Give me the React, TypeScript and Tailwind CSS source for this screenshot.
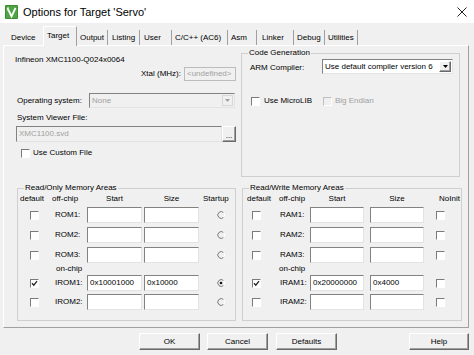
import type { ReactNode } from "react";

const TABS = [
  { name: "Device", w: "w-[40px] pl-[8px]" },
  { name: "Target", w: "w-[34px] pl-[3px]", active: true },
  { name: "Output", w: "w-[31px] pl-[3px]" },
  { name: "Listing", w: "w-[32px] pl-[4px]" },
  { name: "User", w: "w-[32px] pl-[4px]" },
  { name: "C/C++ (AC6)", w: "w-[56px] pl-[3px]" },
  { name: "Asm", w: "w-[29px] pl-[3px]" },
  { name: "Linker", w: "w-[37px] pl-[5px]" },
  { name: "Debug", w: "w-[31px] pl-[3px]" },
  { name: "Utilities", w: "w-[33px] pl-[3px]" },
];

const SUNKEN = "border border-t-[#828282] border-l-[#828282] border-r-[#e3e3e3] border-b-[#e3e3e3]";
const RAISED = "border border-t-white border-l-white border-r-[#696969] border-b-[#696969] shadow-[inset_-1px_-1px_0_#a0a0a0]";

const ROM_ROWS = [
  { label: "ROM1:", start: "", size: "" },
  { label: "ROM2:", start: "", size: "" },
  { label: "ROM3:", start: "", size: "" },
];
const RAM_ROWS = [
  { label: "RAM1:", start: "", size: "" },
  { label: "RAM2:", start: "", size: "" },
  { label: "RAM3:", start: "", size: "" },
];

export default function App() {
  return (
    <div className="h-[355px] w-[474px] overflow-hidden bg-[#f0f0f0] font-['Liberation_Sans',Arial,sans-serif] text-[8px] leading-[10px] text-black">
      {/* title bar */}
      <div className="flex h-[23px] items-center bg-white pl-[5px] pr-[7px]">
        <KeilIcon />
        <span className="ml-[5px] text-[11px] leading-[14px]">Options for Target 'Servo'</span>
        <svg className="ml-auto" width="10" height="10" viewBox="0 0 10 10">
          <path d="M0.5 0.5 L9.5 9.5 M9.5 0.5 L0.5 9.5" stroke="#222" strokeWidth="1" />
        </svg>
      </div>

      {/* tabs */}
      <div className="flex h-[22px] items-end pl-[3px]">
        {TABS.map((tab) =>
          tab.active ? (
            <div key={tab.name} className={`${tab.w} relative z-10 -mb-px h-[20px] border-t border-l border-r border-t-white border-l-white border-r-[#a0a0a0] bg-[#f0f0f0] pt-[4px]`}>{tab.name}</div>
          ) : (
            <div key={tab.name} className={`${tab.w} h-[15px] pt-[3px] ${tab.name === "Device" ? "" : "border-r border-r-[#a0a0a0]"}`}>{tab.name}</div>
          ),
        )}
      </div>

      {/* tab page */}
      <div className="ml-[3px] flex h-[283px] w-[466px] flex-col border border-t-white border-l-white border-r-[#a0a0a0] border-b-[#a0a0a0]">
        <div className="flex">
          {/* left column */}
          <div className="ml-[11px] flex w-[221px] flex-col">
            <div className="mt-[9px]">Infineon XMC1100-Q024x0064</div>
            <div className="mt-[2px] flex items-center justify-end">
              <span className="mr-[3px]">Xtal (MHz):</span>
              <div className={`h-[14px] w-[52px] border border-[#bcbcbc] bg-[#f0f0f0] px-[2px] leading-[12px] text-[#a0a0a0]`}>&lt;undefined&gt;</div>
            </div>
            <div className="mt-[12px] flex items-center">
              <span className="w-[74px] pl-[2px]">Operating system:</span>
              <div className={`${SUNKEN} flex h-[15px] w-[146px] items-center bg-[#f0f0f0] pl-[2px] text-[#a0a0a0]`}>
                <span>None</span>
                <span className="ml-auto mr-px flex h-[11px] w-[11px] items-center justify-center border border-[#d8d8d8]">
                  <svg width="5" height="3" viewBox="0 0 5 3"><path d="M0 0 H5 L2.5 3 Z" fill="#a0a0a0" /></svg>
                </span>
              </div>
            </div>
            <div className="mt-[5px] pl-[2px]">System Viewer File:</div>
            <div className="mt-[3px] flex items-center">
              <div className={`${SUNKEN} ml-px h-[16px] w-[206px] bg-[#f0f0f0] px-[2px] leading-[14px] text-[#a0a0a0]`}>XMC1100.svd</div>
              <div className={`${RAISED} flex h-[16px] w-[14px] items-end justify-center bg-[#f0f0f0] pb-[1px] leading-[8px]`}>...</div>
            </div>
            <div className="mt-[6px] ml-[6px] flex items-center">
              <CheckBox />
              <span className="ml-[3px]">Use Custom File</span>
            </div>
          </div>

          {/* right column */}
          <GroupBox title="Code Generation" className="mt-[7px] ml-[5px] h-[124px] w-[219px]">
            <div className="mt-[5px] flex items-center">
              <span className="ml-[8px] mt-[3px] w-[72px]">ARM Compiler:</span>
              <div className={`${SUNKEN} flex h-[15px] w-[131px] items-center bg-white pl-[2px]`}>
                <span>Use default compiler version 6</span>
                <span className={`${RAISED} ml-auto mr-px flex h-[11px] w-[12px] items-center justify-center bg-[#f0f0f0]`}>
                  <svg width="5" height="3" viewBox="0 0 5 3"><path d="M0 0 H5 L2.5 3 Z" fill="#000" /></svg>
                </span>
              </div>
            </div>
            <div className="mt-[22px] ml-[9px] flex items-center">
              <div className="flex w-[72px] items-center">
                <CheckBox />
                <span className="ml-[4px]">Use MicroLIB</span>
              </div>
              <CheckBox disabled />
              <span className="ml-[3px] text-[#a0a0a0]">Big Endian</span>
            </div>
          </GroupBox>
        </div>

        {/* memory areas */}
        <div className="mt-[11px] flex">
          <GroupBox title="Read/Only Memory Areas" className="ml-[13px] h-[133px] w-[219px]">
            <div className="mt-[5px] flex">
              <span className="w-[28px] pl-[2px]">default</span>
              <span className="w-[41px] pl-[6px]">off-chip</span>
              <span className="w-[55px] text-center">Start</span>
              <span className="ml-[2px] w-[55px] text-center">Size</span>
              <span className="pl-[4px]">Startup</span>
            </div>
            {ROM_ROWS.map((row, i) => (
              <div key={row.label} className={`${i === 0 ? "mt-[3px]" : "mt-[4px]"} flex h-[16px] items-center`}>
                <div className="w-[28px] pl-[12px]"><CheckBox /></div>
                <span className="w-[41px] pl-[9px]">{row.label}</span>
                <Field className="w-[55px]" value={row.start} />
                <Field className="ml-[2px] w-[55px]" value={row.size} />
                <div className="pl-[18px]"><Radio /></div>
              </div>
            ))}
            <div className="mt-px pl-[38px]">on-chip</div>
            <div className="mt-px flex h-[16px] items-center">
              <div className="w-[28px] pl-[12px]"><CheckBox checked /></div>
              <span className="w-[41px] pl-[9px]">IROM1:</span>
              <Field className="w-[55px]" value="0x10001000" />
              <Field className="ml-[2px] w-[55px]" value="0x10000" />
              <div className="pl-[18px]"><Radio checked /></div>
            </div>
            <div className="mt-[3px] flex h-[16px] items-center">
              <div className="w-[28px] pl-[12px]"><CheckBox /></div>
              <span className="w-[41px] pl-[9px]">IROM2:</span>
              <Field className="w-[55px]" value="" />
              <Field className="ml-[2px] w-[55px]" value="" />
              <div className="pl-[18px]"><Radio /></div>
            </div>
          </GroupBox>

          <GroupBox title="Read/Write Memory Areas" className="ml-[6px] h-[133px] w-[220px]">
            <div className="mt-[5px] flex">
              <span className="w-[28px] pl-[4px]">default</span>
              <span className="w-[39px] pl-[8px]">off-chip</span>
              <span className="w-[54px] text-center">Start</span>
              <span className="ml-[6px] w-[54px] text-center">Size</span>
              <span className="pl-[15px]">NoInit</span>
            </div>
            {RAM_ROWS.map((row, i) => (
              <div key={row.label} className={`${i === 0 ? "mt-[3px]" : "mt-[4px]"} flex h-[16px] items-center`}>
                <div className="w-[28px] pl-[9px]"><CheckBox /></div>
                <span className="w-[39px] pl-[9px]">{row.label}</span>
                <Field className="w-[54px]" value={row.start} />
                <Field className="ml-[6px] w-[54px]" value={row.size} />
                <div className="pl-[12px]"><CheckBox /></div>
              </div>
            ))}
            <div className="mt-px pl-[36px]">on-chip</div>
            <div className="mt-px flex h-[16px] items-center">
              <div className="w-[28px] pl-[9px]"><CheckBox checked /></div>
              <span className="w-[39px] pl-[9px]">IRAM1:</span>
              <Field className="w-[54px]" value="0x20000000" />
              <Field className="ml-[6px] w-[54px]" value="0x4000" />
              <div className="pl-[12px]"><CheckBox /></div>
            </div>
            <div className="mt-[3px] flex h-[16px] items-center">
              <div className="w-[28px] pl-[9px]"><CheckBox /></div>
              <span className="w-[39px] pl-[9px]">IRAM2:</span>
              <Field className="w-[54px]" value="" />
              <Field className="ml-[6px] w-[54px]" value="" />
              <div className="pl-[12px]"><CheckBox /></div>
            </div>
          </GroupBox>
        </div>
      </div>

      {/* dialog buttons */}
      <div className="mt-[5px] flex pl-[139px] pr-[5px]">
        <DialogButton className="w-[61px]">OK</DialogButton>
        <DialogButton className="ml-[7px] w-[61px]">Cancel</DialogButton>
        <DialogButton className="ml-[8px] w-[61px]">Defaults</DialogButton>
        <DialogButton className="ml-auto w-[60px]">Help</DialogButton>
      </div>
    </div>
  );
}

function GroupBox({ title, className, children }: { title: string; className: string; children: ReactNode }) {
  return (
    <div className={`relative flex flex-col border border-[#cfcfcf] ${className}`}>
      <span className="absolute -top-[6px] left-[6px] bg-[#f0f0f0] px-px">{title}</span>
      {children}
    </div>
  );
}

function Field({ className, value }: { className: string; value: string }) {
  return <div className={`${SUNKEN} h-[16px] bg-white px-[2px] leading-[13px] ${className}`}>{value}</div>;
}

function DialogButton({ className, children }: { className: string; children: ReactNode }) {
  return <div className={`${RAISED} flex h-[17px] items-center justify-center bg-[#f0f0f0] ${className}`}>{children}</div>;
}

function CheckBox({ checked, disabled }: { checked?: boolean; disabled?: boolean }) {
  return (
    <span className={`flex size-[9px] items-center justify-center border border-t-[#7a7a7a] border-l-[#7a7a7a] border-r-white border-b-white ${disabled ? "border-t-[#c0c0c0] border-l-[#c0c0c0] bg-[#f0f0f0]" : "bg-white"}`}>
      {checked && (
        <svg width="7" height="7" viewBox="0 0 7 7">
          <path d="M1 3.2 L2.8 5.2 L6 1.2" stroke="#222" strokeWidth="1.3" fill="none" />
        </svg>
      )}
    </span>
  );
}

function Radio({ checked }: { checked?: boolean }) {
  return (
    <svg width="8" height="8" viewBox="0 0 8 8" className="block">
      <path d="M6.6 1.6 A3.4 3.4 0 1 0 6.6 6.4" stroke="#7a7a7a" strokeWidth="1" fill="none" />
      <path d="M6.6 6.4 A3.4 3.4 0 0 0 6.6 1.6" stroke="#ffffff" strokeWidth="1" fill="none" />
      {checked && <circle cx="4" cy="4" r="1.3" fill="#111" />}
    </svg>
  );
}

function KeilIcon() {
  return (
    <svg width="13" height="14" viewBox="0 0 13 14">
      <rect x="0" y="0" width="13" height="14" rx="1" fill="#3d8c34" />
      <rect x="1" y="1" width="11" height="12" fill="#4fa544" />
      <path d="M2.5 3 L6.5 11.5 L10.5 3" stroke="#ffffff" strokeWidth="1.8" fill="none" />
      <path d="M3 2 V6" stroke="#d8f0c8" strokeWidth="1" />
    </svg>
  );
}
